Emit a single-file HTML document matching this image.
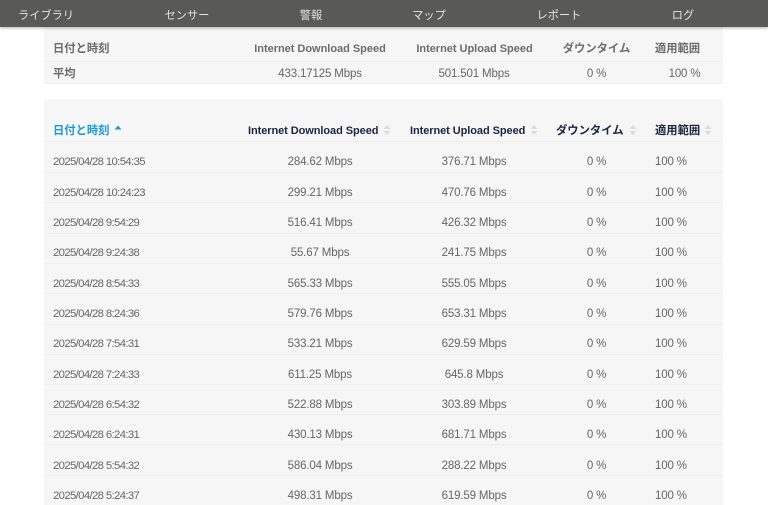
<!DOCTYPE html>
<html lang="ja"><head><meta charset="utf-8"><style>
html,body{margin:0;padding:0;background:#fff}
body{width:768px;height:505px;overflow:hidden;position:relative;font-family:"Liberation Sans","Noto Sans CJK JP",sans-serif;font-size:11.5px;color:#666}
#nav{position:absolute;left:0;top:0;width:768px;height:27px;background:#595955;box-shadow:0 1px 3px rgba(0,0,0,.3);z-index:2}
#nav span{position:absolute;top:8.500px;transform:translateX(-50%);color:#e2e2e2;font-size:11.200px;line-height:14px;white-space:nowrap}
.p{position:absolute;left:44px;width:679px;background:#f6f6f6}
.l{position:absolute;left:44px;width:679px;height:1px;background:#eeeeee}
.t{position:absolute;white-space:nowrap;line-height:14px;margin-top:1px;letter-spacing:-.15px}
.c{transform:translateX(-50%)}
.h{font-weight:bold;color:#6c6c6c;font-size:11px;letter-spacing:-.02px}
.d{font-weight:bold;color:#1c2540;font-size:11px;letter-spacing:-.07px}
.j{font-size:11.3px;letter-spacing:0}
.a{font-size:11.300px;letter-spacing:-.62px}
.s{position:absolute;width:8px;height:12px}
</style></head><body>
<div id="nav"><span style="left:46px">ライブラリ</span><span style="left:187px">センサー</span><span style="left:311px">警報</span><span style="left:429px">マップ</span><span style="left:559px">レポート</span><span style="left:683px">ログ</span></div>
<div class="p" style="top:27px;height:57px"></div><div class="l" style="top:61px"></div><div class="l" style="top:83px"></div>
<div class="p" style="top:99px;height:406px"></div><div class="l" style="top:141px"></div>
<span class="t h j" style="left:53px;top:41px">日付と時刻</span><span class="t h c" style="left:320px;top:41px">Internet Download Speed</span><span class="t h c" style="left:474.500px;top:41px">Internet Upload Speed</span><span class="t h c j" style="left:596.500px;top:41px">ダウンタイム</span><span class="t h c j" style="left:677.500px;top:41px">適用範囲</span>
<span class="t h j" style="left:53px;top:66px">平均</span><span class="t c" style="left:320px;top:66px">433.17125 Mbps</span><span class="t c" style="left:474px;top:66px">501.501 Mbps</span><span class="t c" style="left:596.500px;top:66px">0 %</span><span class="t c" style="left:684.500px;top:66px">100 %</span>
<span class="t j" style="left:53px;top:123px;font-weight:bold;color:#1a9bd7">日付と時刻</span>
<svg class="s" style="left:114px;top:124px" viewBox="0 0 8 12"><path d="M.5 5.500 4 1.500 7.500 5.500z" fill="#1a9bd7"/></svg>
<span class="t d" style="left:248px;top:123px">Internet Download Speed</span><svg class="s" style="left:383px;top:124px" viewBox="0 0 8 12"><path d="M.5 5 4 1 7.500 5zM.5 7 4 11 7.500 7z" fill="#dcdcdc"/></svg>
<span class="t d" style="left:410px;top:123px">Internet Upload Speed</span><svg class="s" style="left:530px;top:124px" viewBox="0 0 8 12"><path d="M.5 5 4 1 7.500 5zM.5 7 4 11 7.500 7z" fill="#dcdcdc"/></svg>
<span class="t d j" style="left:556px;top:123px">ダウンタイム</span><svg class="s" style="left:629px;top:124px" viewBox="0 0 8 12"><path d="M.5 5 4 1 7.500 5zM.5 7 4 11 7.500 7z" fill="#dcdcdc"/></svg>
<span class="t d j" style="left:655px;top:123px">適用範囲</span><svg class="s" style="left:704px;top:124px" viewBox="0 0 8 12"><path d="M.5 5 4 1 7.500 5zM.5 7 4 11 7.500 7z" fill="#dcdcdc"/></svg>
<div class="l" style="top:172px"></div><span class="t a" style="left:53px;top:154px">2025/04/28 10:54:35</span><span class="t c" style="left:320px;top:154px">284.62 Mbps</span><span class="t c" style="left:474px;top:154px">376.71 Mbps</span><span class="t c" style="left:596.500px;top:154px">0 %</span><span class="t" style="left:655px;top:154px">100 %</span>
<div class="l" style="top:202px"></div><span class="t a" style="left:53px;top:185px">2025/04/28 10:24:23</span><span class="t c" style="left:320px;top:185px">299.21 Mbps</span><span class="t c" style="left:474px;top:185px">470.76 Mbps</span><span class="t c" style="left:596.500px;top:185px">0 %</span><span class="t" style="left:655px;top:185px">100 %</span>
<div class="l" style="top:233px"></div><span class="t a" style="left:53px;top:215px">2025/04/28 9:54:29</span><span class="t c" style="left:320px;top:215px">516.41 Mbps</span><span class="t c" style="left:474px;top:215px">426.32 Mbps</span><span class="t c" style="left:596.500px;top:215px">0 %</span><span class="t" style="left:655px;top:215px">100 %</span>
<div class="l" style="top:263px"></div><span class="t a" style="left:53px;top:245px">2025/04/28 9:24:38</span><span class="t c" style="left:320px;top:245px">55.67 Mbps</span><span class="t c" style="left:474px;top:245px">241.75 Mbps</span><span class="t c" style="left:596.500px;top:245px">0 %</span><span class="t" style="left:655px;top:245px">100 %</span>
<div class="l" style="top:293px"></div><span class="t a" style="left:53px;top:276px">2025/04/28 8:54:33</span><span class="t c" style="left:320px;top:276px">565.33 Mbps</span><span class="t c" style="left:474px;top:276px">555.05 Mbps</span><span class="t c" style="left:596.500px;top:276px">0 %</span><span class="t" style="left:655px;top:276px">100 %</span>
<div class="l" style="top:324px"></div><span class="t a" style="left:53px;top:306px">2025/04/28 8:24:36</span><span class="t c" style="left:320px;top:306px">579.76 Mbps</span><span class="t c" style="left:474px;top:306px">653.31 Mbps</span><span class="t c" style="left:596.500px;top:306px">0 %</span><span class="t" style="left:655px;top:306px">100 %</span>
<div class="l" style="top:354px"></div><span class="t a" style="left:53px;top:336px">2025/04/28 7:54:31</span><span class="t c" style="left:320px;top:336px">533.21 Mbps</span><span class="t c" style="left:474px;top:336px">629.59 Mbps</span><span class="t c" style="left:596.500px;top:336px">0 %</span><span class="t" style="left:655px;top:336px">100 %</span>
<div class="l" style="top:384px"></div><span class="t a" style="left:53px;top:367px">2025/04/28 7:24:33</span><span class="t c" style="left:320px;top:367px">611.25 Mbps</span><span class="t c" style="left:474px;top:367px">645.8 Mbps</span><span class="t c" style="left:596.500px;top:367px">0 %</span><span class="t" style="left:655px;top:367px">100 %</span>
<div class="l" style="top:414px"></div><span class="t a" style="left:53px;top:397px">2025/04/28 6:54:32</span><span class="t c" style="left:320px;top:397px">522.88 Mbps</span><span class="t c" style="left:474px;top:397px">303.89 Mbps</span><span class="t c" style="left:596.500px;top:397px">0 %</span><span class="t" style="left:655px;top:397px">100 %</span>
<div class="l" style="top:444px"></div><span class="t a" style="left:53px;top:427px">2025/04/28 6:24:31</span><span class="t c" style="left:320px;top:427px">430.13 Mbps</span><span class="t c" style="left:474px;top:427px">681.71 Mbps</span><span class="t c" style="left:596.500px;top:427px">0 %</span><span class="t" style="left:655px;top:427px">100 %</span>
<div class="l" style="top:475px"></div><span class="t a" style="left:53px;top:458px">2025/04/28 5:54:32</span><span class="t c" style="left:320px;top:458px">586.04 Mbps</span><span class="t c" style="left:474px;top:458px">288.22 Mbps</span><span class="t c" style="left:596.500px;top:458px">0 %</span><span class="t" style="left:655px;top:458px">100 %</span>
<span class="t a" style="left:53px;top:488px">2025/04/28 5:24:37</span><span class="t c" style="left:320px;top:488px">498.31 Mbps</span><span class="t c" style="left:474px;top:488px">619.59 Mbps</span><span class="t c" style="left:596.500px;top:488px">0 %</span><span class="t" style="left:655px;top:488px">100 %</span>
</body></html>
